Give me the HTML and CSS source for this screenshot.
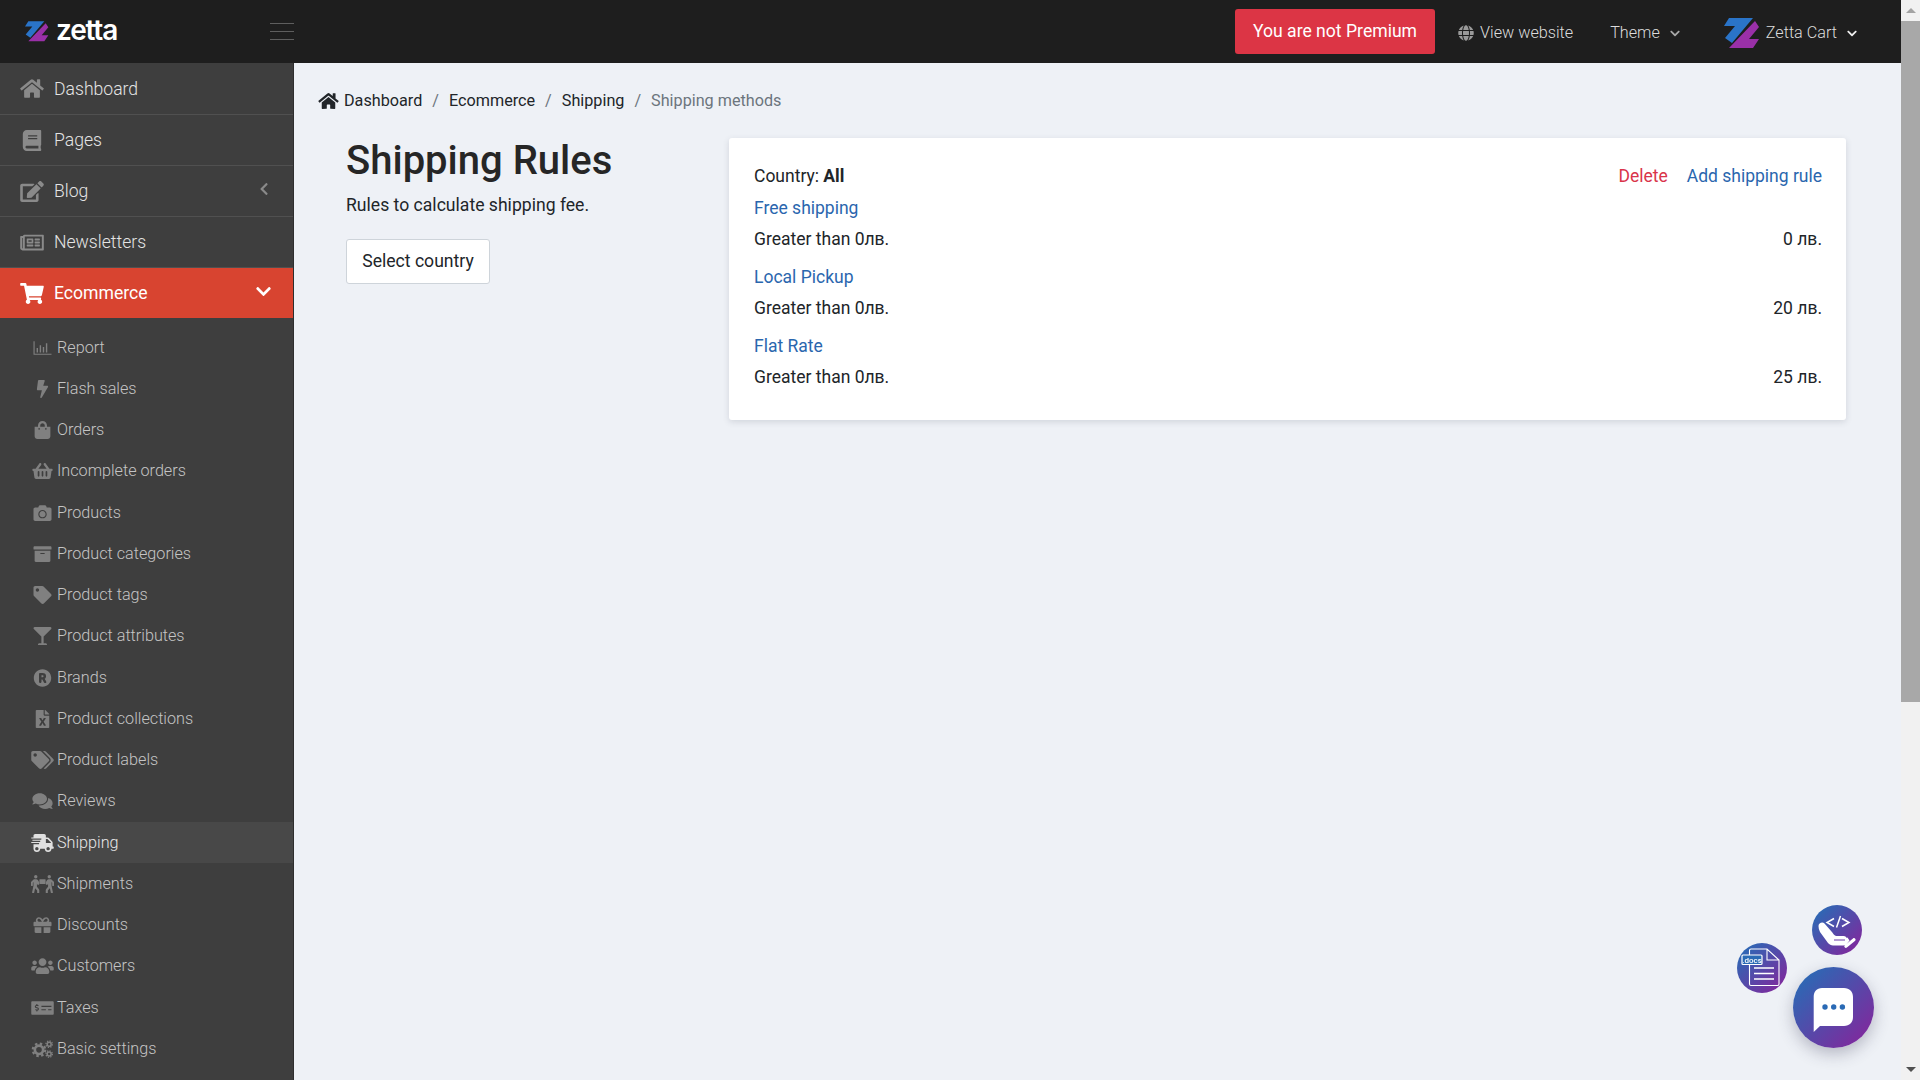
FILE: index.html
```html
<!DOCTYPE html>
<html lang="en">

<head>
  <meta charset="UTF-8">
  <meta name="viewport" content="width=device-width, initial-scale=1.0">
  <title>Shipping methods</title>
  <link rel="stylesheet" href="styles.css">
</head>

<body>
  <!-- icon sprite -->
  <svg class="sprite" xmlns="http://www.w3.org/2000/svg">
    <symbol id="i-home" viewBox="0 0 576 512"><path d="M280.37 148.26L96 300.11V464a16 16 0 0 0 16 16l112.06-.29a16 16 0 0 0 15.92-16V368a16 16 0 0 1 16-16h64a16 16 0 0 1 16 16v95.64a16 16 0 0 0 16 16.05L464 480a16 16 0 0 0 16-16V300L295.67 148.26a12.19 12.19 0 0 0-15.3 0zM571.6 251.47L488 182.56V44.05a12 12 0 0 0-12-12h-56a12 12 0 0 0-12 12v72.61L318.47 43a48 48 0 0 0-61 0L4.34 251.47a12 12 0 0 0-1.6 16.9l25.5 31A12 12 0 0 0 45.15 301l235.22-193.74a12.19 12.19 0 0 1 15.3 0L530.9 301a12 12 0 0 0 16.9-1.6l25.5-31a12 12 0 0 0-1.7-16.93z"/></symbol>
    <symbol id="i-book" viewBox="0 0 448 512"><path d="M448 360V24c0-13.3-10.7-24-24-24H96C43 0 0 43 0 96v320c0 53 43 96 96 96h328c13.3 0 24-10.7 24-24v-16c0-7.5-3.5-14.3-8.9-18.7-4.2-15.4-4.2-59.3 0-74.7 5.4-4.3 8.9-11.1 8.9-18.6zM128 134c0-3.3 2.7-6 6-6h212c3.3 0 6 2.7 6 6v20c0 3.3-2.7 6-6 6H134c-3.3 0-6-2.7-6-6v-20zm0 64c0-3.3 2.7-6 6-6h212c3.3 0 6 2.7 6 6v20c0 3.3-2.7 6-6 6H134c-3.3 0-6-2.7-6-6v-20zm253.4 250H96c-17.7 0-32-14.3-32-32 0-17.6 14.4-32 32-32h285.4c-1.9 17.1-1.9 46.9 0 64z"/></symbol>
    <symbol id="i-edit" viewBox="0 0 576 512"><path d="M402.6 83.2l90.2 90.2c3.8 3.8 3.8 10 0 13.8L274.4 405.6l-92.8 10.3c-12.4 1.4-22.9-9.1-21.5-21.5l10.3-92.8L388.8 83.2c3.8-3.8 10-3.8 13.8 0zm162-22.9l-48.8-48.8c-15.2-15.2-39.9-15.2-55.2 0l-35.4 35.4c-3.8 3.8-3.8 10 0 13.8l90.2 90.2c3.8 3.8 10 3.8 13.8 0l35.4-35.4c15.2-15.3 15.2-40 0-55.2zM384 346.2V448H64V128h229.8c3.2 0 6.2-1.3 8.5-3.5l40-40c7.6-7.6 2.2-20.5-8.5-20.5H48C21.5 64 0 85.5 0 112v352c0 26.5 21.5 48 48 48h352c26.5 0 48-21.5 48-48V306.2c0-10.7-12.9-16-20.5-8.5l-40 40c-2.2 2.3-3.5 5.3-3.5 8.5z"/></symbol>
    <symbol id="i-news" viewBox="0 0 576 512"><path d="M552 64H112c-20.858 0-38.643 13.377-45.248 32H24c-13.255 0-24 10.745-24 24v272c0 30.928 25.072 56 56 56h496c13.255 0 24-10.745 24-24V88c0-13.255-10.745-24-24-24zM48 392V144h16v248c0 4.411-3.589 8-8 8s-8-3.589-8-8zm480 8H111.422c.374-2.614.578-5.283.578-8V112h416v288zM172 280h136c6.627 0 12-5.373 12-12v-96c0-6.627-5.373-12-12-12H172c-6.627 0-12 5.373-12 12v96c0 6.627 5.373 12 12 12zm28-80h80v40h-80v-40zm-40 140v-24c0-6.627 5.373-12 12-12h136c6.627 0 12 5.373 12 12v24c0 6.627-5.373 12-12 12H172c-6.627 0-12-5.373-12-12zm192 0v-24c0-6.627 5.373-12 12-12h104c6.627 0 12 5.373 12 12v24c0 6.627-5.373 12-12 12H364c-6.627 0-12-5.373-12-12zm0-144v-24c0-6.627 5.373-12 12-12h104c6.627 0 12 5.373 12 12v24c0 6.627-5.373 12-12 12H364c-6.627 0-12-5.373-12-12zm0 72v-24c0-6.627 5.373-12 12-12h104c6.627 0 12 5.373 12 12v24c0 6.627-5.373 12-12 12H364c-6.627 0-12-5.373-12-12z"/></symbol>
    <symbol id="i-cart" viewBox="0 0 576 512"><path d="M528.12 301.319l47.273-208C578.806 78.301 567.391 64 551.99 64H159.208l-9.166-44.81C147.758 8.021 137.93 0 126.529 0H24C10.745 0 0 10.745 0 24v16c0 13.255 10.745 24 24 24h69.883l70.248 343.435C147.325 417.1 136 435.222 136 456c0 30.928 25.072 56 56 56s56-25.072 56-56c0-15.674-6.447-29.835-16.824-40h209.647C430.447 426.165 424 440.326 424 456c0 30.928 25.072 56 56 56s56-25.072 56-56c0-22.172-12.888-41.332-31.579-50.405l5.517-24.276c3.413-15.018-8.002-29.319-23.403-29.319H218.117l-6.545-32h293.145c11.206 0 20.92-7.754 23.403-18.681z"/></symbol>
    <symbol id="i-down" viewBox="0 0 448 512"><path d="M207.029 381.476L12.686 187.132c-9.373-9.373-9.373-24.569 0-33.941l22.667-22.667c9.357-9.357 24.522-9.375 33.901-.04L224 284.505l154.745-154.021c9.379-9.335 24.544-9.317 33.901.04l22.667 22.667c9.373 9.373 9.373 24.569 0 33.941L240.971 381.476c-9.373 9.372-24.569 9.372-33.942 0z"/></symbol>
    <symbol id="i-left" viewBox="0 0 320 512"><path d="M34.52 239.03L228.87 44.69c9.37-9.37 24.57-9.37 33.94 0l22.67 22.67c9.36 9.36 9.37 24.52.04 33.9L131.49 256l154.02 154.75c9.34 9.38 9.32 24.54-.04 33.9l-22.67 22.67c-9.37 9.37-24.57 9.37-33.94 0L34.52 272.97c-9.37-9.37-9.37-24.57 0-33.94z"/></symbol>
    <symbol id="i-chart" viewBox="0 0 512 512"><path d="M0 64h32v352h480v32H0zM88 256h40v128H88zM176 176h40v208h-40zM264 224h40v160h-40zM352 120h40v264h-40z"/></symbol>
    <symbol id="i-bolt" viewBox="0 0 320 512"><path d="M296 160H180.6l42.6-129.8C227.2 15 215.7 0 200 0H56C44 0 33.8 8.9 32.2 20.8l-32 240C-1.7 275.2 9.5 288 24 288h118.7L96.6 482.5c-3.6 15.2 8 29.5 23.3 29.5 8.4 0 16.4-4.4 20.8-12l176-304c9.3-15.9-2.2-36-20.7-36z"/></symbol>
    <symbol id="i-bag" viewBox="0 0 448 512"><path d="M352 160v-32C352 57.42 294.579 0 224 0 153.42 0 96 57.42 96 128v32H0v272c0 44.183 35.817 80 80 80h288c44.183 0 80-35.817 80-80V160h-96zm-192-32c0-35.29 28.71-64 64-64s64 28.71 64 64v32H160v-32zm160 120c-13.255 0-24-10.745-24-24s10.745-24 24-24 24 10.745 24 24-10.745 24-24 24zm-192 0c-13.255 0-24-10.745-24-24s10.745-24 24-24 24 10.745 24 24-10.745 24-24 24z"/></symbol>
    <symbol id="i-basket" viewBox="0 0 576 512"><path d="M576 216v16c0 13.255-10.745 24-24 24h-8l-26.113 182.788C514.509 462.435 494.257 480 470.37 480H105.63c-23.887 0-44.139-17.565-47.518-41.212L32 256h-8c-13.255 0-24-10.745-24-24v-16c0-13.255 10.745-24 24-24h67.341l106.78-146.821c10.395-14.292 30.407-17.453 44.701-7.058 14.293 10.395 17.453 30.408 7.058 44.701L170.477 192h235.046L326.12 82.821c-10.395-14.292-7.234-34.306 7.059-44.701 14.291-10.395 34.306-7.235 44.701 7.058L484.659 192H552c13.255 0 24 10.745 24 24zM312 392V280c0-13.255-10.745-24-24-24s-24 10.745-24 24v112c0 13.255 10.745 24 24 24s24-10.745 24-24zm112 0V280c0-13.255-10.745-24-24-24s-24 10.745-24 24v112c0 13.255 10.745 24 24 24s24-10.745 24-24zm-224 0V280c0-13.255-10.745-24-24-24s-24 10.745-24 24v112c0 13.255 10.745 24 24 24s24-10.745 24-24z"/></symbol>
    <symbol id="i-camera" viewBox="0 0 512 512"><path d="M512 144v288c0 26.5-21.5 48-48 48H48c-26.5 0-48-21.5-48-48V144c0-26.5 21.5-48 48-48h88l12.3-32.9c7-18.7 24.9-31.1 44.9-31.1h125.5c20 0 37.9 12.4 44.9 31.1L376 96h88c26.5 0 48 21.5 48 48zM376 288c0-66.2-53.8-120-120-120s-120 53.8-120 120 53.8 120 120 120 120-53.8 120-120zm-32 0c0 48.5-39.5 88-88 88s-88-39.5-88-88 39.5-88 88-88 88 39.5 88 88z"/></symbol>
    <symbol id="i-archive" viewBox="0 0 512 512"><path d="M32 448c0 17.7 14.3 32 32 32h384c17.7 0 32-14.3 32-32V160H32v288zm160-212c0-6.6 5.4-12 12-12h104c6.6 0 12 5.4 12 12v8c0 6.6-5.4 12-12 12H204c-6.6 0-12-5.4-12-12v-8zM480 32H32C14.3 32 0 46.3 0 64v48c0 8.8 7.2 16 16 16h480c8.8 0 16-7.2 16-16V64c0-17.7-14.3-32-32-32z"/></symbol>
    <symbol id="i-tag" viewBox="0 0 512 512"><path d="M0 252.118V48C0 21.49 21.49 0 48 0h204.118a48 48 0 0 1 33.941 14.059l211.882 211.882c18.745 18.745 18.745 49.137 0 67.882L293.823 497.941c-18.745 18.745-49.137 18.745-67.882 0L14.059 286.059A48 48 0 0 1 0 252.118zM112 64c-26.51 0-48 21.49-48 48s21.49 48 48 48 48-21.49 48-48-21.49-48-48-48z"/></symbol>
    <symbol id="i-glass" viewBox="0 0 512 512"><path d="M502.05 57.6C523.3 36.34 508.25 0 478.2 0H33.8C3.75 0-11.3 36.34 9.95 57.6L224 271.64V464h-56c-22.09 0-40 17.91-40 40 0 4.42 3.58 8 8 8h240c4.42 0 8-3.58 8-8 0-22.09-17.91-40-40-40h-56V271.64L502.05 57.6z"/></symbol>
    <symbol id="i-reg" viewBox="0 0 512 512"><path d="M285.363 207.475c0 18.6-9.831 28.431-28.431 28.431h-29.876v-56.14h23.378c28.668 0 34.929 8.773 34.929 27.709zM504 256c0 136.967-111.033 248-248 248S8 392.967 8 256 119.033 8 256 8s248 111.033 248 248zM363.411 360.414c-46.729-84.825-43.299-78.636-44.702-80.98 23.432-15.172 37.945-42.979 37.945-74.486 0-54.244-31.5-89.252-105.498-89.252h-70.667c-13.255 0-24 10.745-24 24V372c0 13.255 10.745 24 24 24h22.567c13.255 0 24-10.745 24-24v-71.663h25.556l44.129 82.937a24.001 24.001 0 0 0 21.188 12.727h24.464c18.261-.001 29.829-19.591 21.018-35.587z"/></symbol>
    <symbol id="i-file" viewBox="0 0 384 512"><path d="M224 136V0H24C10.7 0 0 10.7 0 24v464c0 13.3 10.7 24 24 24h336c13.3 0 24-10.7 24-24V160H248c-13.2 0-24-10.8-24-24zm60.1 106.5L224 336l60.1 93.5c5.1 8-.6 18.5-10.1 18.5h-34.9c-4.4 0-8.5-2.4-10.6-6.3C208.9 405.5 192 373 192 373c-6.4 14.8-10 20-36.6 68.8-2.1 3.9-6.1 6.3-10.5 6.3H110c-9.5 0-15.2-10.5-10.1-18.5l60.3-93.5-60.3-93.5c-5.2-8 .6-18.5 10.1-18.5h34.8c4.4 0 8.5 2.4 10.6 6.3 26.1 48.8 20 33.6 36.6 68.5 0 0 6.1-11.7 36.6-68.5 2.1-3.9 6.2-6.3 10.6-6.3H274c9.5-.1 15.2 10.4 10.1 18.4zM384 121.9v6.1H256V0h6.1c6.4 0 12.5 2.5 17 7l97.9 98c4.5 4.5 7 10.6 7 16.9z"/></symbol>
    <symbol id="i-tags" viewBox="0 0 640 512"><path d="M497.941 225.941L286.059 14.059A48 48 0 0 0 252.118 0H48C21.49 0 0 21.49 0 48v204.118a48 48 0 0 0 14.059 33.941l211.882 211.882c18.744 18.745 49.136 18.746 67.882 0l204.118-204.118c18.745-18.745 18.745-49.137 0-67.882zM112 160c-26.51 0-48-21.49-48-48s21.49-48 48-48 48 21.49 48 48-21.49 48-48 48zm513.941 133.823L421.823 497.941c-18.745 18.745-49.137 18.745-67.882 0l-.36-.36L527.64 323.522c16.999-16.999 26.36-39.6 26.36-63.64s-9.362-46.641-26.36-63.64L331.397 0h48.721a48 48 0 0 1 33.941 14.059l211.882 211.882c18.745 18.745 18.745 49.137 0 67.882z"/></symbol>
    <symbol id="i-comments" viewBox="0 0 576 512"><path d="M416 192c0-88.4-93.1-160-208-160S0 103.6 0 192c0 34.3 14.1 65.9 38 92-13.4 30.2-35.5 54.2-35.8 54.5-2.2 2.3-2.8 5.7-1.5 8.7S4.8 352 8 352c36.6 0 66.9-12.3 88.7-25 32.2 15.7 70.3 25 111.3 25 114.9 0 208-71.6 208-160zm122 220c23.9-26 38-57.7 38-92 0-66.9-53.5-124.2-129.3-148.1.9 6.6 1.3 13.3 1.3 20.1 0 105.9-107.7 192-240 192-10.8 0-21.3-.8-31.7-1.9C207.8 439.6 281.8 480 368 480c41 0 79.1-9.2 111.3-25 21.8 12.7 52.1 25 88.7 25 3.2 0 6.1-1.9 7.3-4.8 1.3-2.9.7-6.3-1.5-8.7-.3-.3-22.4-24.2-35.8-54.5z"/></symbol>
    <symbol id="i-truck" viewBox="0 0 640 512"><path d="M624 352h-16V243.9c0-12.7-5.1-24.9-14.1-33.9L494 110.1c-9-9-21.2-14.1-33.9-14.1H416V48c0-26.5-21.5-48-48-48H112C85.5 0 64 21.5 64 48v48H8c-4.4 0-8 3.6-8 8v16c0 4.4 3.6 8 8 8h272c4.4 0 8 3.6 8 8v16c0 4.4-3.6 8-8 8H40c-4.4 0-8 3.6-8 8v16c0 4.4 3.6 8 8 8h208c4.4 0 8 3.6 8 8v16c0 4.4-3.6 8-8 8H8c-4.4 0-8 3.6-8 8v16c0 4.4 3.6 8 8 8h208c4.4 0 8 3.6 8 8v16c0 4.4-3.6 8-8 8H64v128c0 53 43 96 96 96s96-43 96-96h128c0 53 43 96 96 96s96-43 96-96h48c8.8 0 16-7.2 16-16v-32c0-8.8-7.2-16-16-16zM160 464c-26.5 0-48-21.5-48-48s21.5-48 48-48 48 21.5 48 48-21.5 48-48 48zm320 0c-26.5 0-48-21.5-48-48s21.5-48 48-48 48 21.5 48 48-21.5 48-48 48zm80-208H416V144h44.1l99.9 99.9V256z"/></symbol>
    <symbol id="i-carry" viewBox="0 0 640 512"><circle cx="128" cy="48" r="48"/><circle cx="512" cy="48" r="48"/><rect x="232" y="120" width="176" height="136" rx="12"/><path d="M74 120h66c22 0 40 10 52 30l34 58h-2v70h-46l-16-26v82l52 62c10 12 14 24 14 38v66c0 17-14 30-30 30s-30-13-30-30v-58l-58-66-26 124c-4 16-18 26-34 24-18-3-28-18-25-36l38-180V196l-18 22v70c0 16-12 28-28 28S-8 304-8 288v-78c0-8 2-14 8-20zM566 120h-66c-22 0-40 10-52 30l-34 58h2v70h46l16-26v82l-52 62c-10 12-14 24-14 38v66c0 17 14 30 30 30s30-13 30-30v-58l58-66 26 124c4 16 18 26 34 24 18-3 28-18 25-36l-38-180V196l18 22v70c0 16 12 28 28 28s28-12 28-28v-78c0-8-2-14-8-20z"/></symbol>
    <symbol id="i-gift" viewBox="0 0 512 512"><path d="M32 448c0 17.7 14.3 32 32 32h160V320H32v128zm256 32h160c17.7 0 32-14.3 32-32V320H288v160zm192-320h-42.1c6.2-12.1 10.1-25.5 10.1-40 0-48.5-39.5-88-88-88-41.6 0-68.5 21.3-103 68.3-34.5-47-61.4-68.3-103-68.3-48.5 0-88 39.5-88 88 0 14.5 3.8 27.9 10.1 40H32c-17.7 0-32 14.3-32 32v80c0 8.8 7.2 16 16 16h480c8.8 0 16-7.2 16-16v-80c0-17.7-14.3-32-32-32zm-326.1 0c-22.1 0-40-17.9-40-40s17.9-40 40-40c19.9 0 34.6 3.3 86.1 80h-86.1zm206.1 0h-86.1c51.4-76.5 65.7-80 86.1-80 22.1 0 40 17.9 40 40s-17.9 40-40 40z"/></symbol>
    <symbol id="i-users" viewBox="0 0 640 512"><path d="M96 224c35.3 0 64-28.7 64-64s-28.7-64-64-64-64 28.7-64 64 28.7 64 64 64zm448 0c35.3 0 64-28.7 64-64s-28.7-64-64-64-64 28.7-64 64 28.7 64 64 64zm32 32h-64c-17.6 0-33.5 7.1-45.1 18.6 40.3 22.1 68.9 62 75.1 109.4h66c17.7 0 32-14.3 32-32v-32c0-35.3-28.7-64-64-64zm-256 0c61.9 0 112-50.1 112-112S381.9 32 320 32 208 82.1 208 144s50.1 112 112 112zm76.8 32h-8.3c-20.8 10-43.9 16-68.5 16s-47.6-6-68.5-16h-8.3C179.6 288 128 339.6 128 403.2V432c0 26.5 21.5 48 48 48h288c26.5 0 48-21.5 48-48v-28.8c0-63.6-51.6-115.2-115.2-115.2zm-223.7-13.4C161.5 263.1 145.6 256 128 256H64c-35.3 0-64 28.7-64 64v32c0 17.7 14.3 32 32 32h65.9c6.3-47.4 34.9-87.3 75.2-109.4z"/></symbol>
    <symbol id="i-money" viewBox="0 0 640 512"><path d="M608 64H32C14.33 64 0 78.33 0 96v320c0 17.67 14.33 32 32 32h576c17.67 0 32-14.33 32-32V96c0-17.67-14.33-32-32-32zM176 327.88V344c0 4.42-3.58 8-8 8h-16c-4.42 0-8-3.58-8-8v-16.29c-11.29-.58-22.27-4.52-31.37-11.35-3.9-2.93-4.1-8.77-.57-12.14l11.75-11.21c2.77-2.64 6.89-2.76 10.13-.73 3.87 2.42 8.26 3.72 12.82 3.72h28.11c6.5 0 11.8-5.92 11.8-13.19 0-5.95-3.61-11.19-8.77-12.73l-45-13.5c-18.59-5.58-31.58-23.42-31.58-43.39 0-24.52 19.05-44.44 42.67-45.07V152c0-4.42 3.58-8 8-8h16c4.42 0 8 3.58 8 8v16.29c11.29.58 22.27 4.51 31.37 11.35 3.9 2.93 4.1 8.77.57 12.14l-11.75 11.21c-2.77 2.64-6.89 2.76-10.13.73-3.87-2.43-8.26-3.72-12.82-3.72h-28.11c-6.5 0-11.8 5.92-11.8 13.19 0 5.95 3.61 11.19 8.77 12.73l45 13.5c18.59 5.58 31.58 23.42 31.58 43.39 0 24.53-19.05 44.44-42.67 45.07zM416 312c0 4.42-3.58 8-8 8H296c-4.42 0-8-3.58-8-8v-16c0-4.42 3.58-8 8-8h112c4.42 0 8 3.58 8 8v16zm160 0c0 4.42-3.58 8-8 8h-80c-4.42 0-8-3.58-8-8v-16c0-4.42 3.58-8 8-8h80c4.42 0 8 3.58 8 8v16zm0-96c0 4.42-3.58 8-8 8H296c-4.42 0-8-3.58-8-8v-16c0-4.42 3.58-8 8-8h272c4.42 0 8 3.58 8 8v16z"/></symbol>
    <symbol id="i-cogs" viewBox="0 0 640 512">
      <circle cx="220" cy="280" r="118" fill="none" stroke="currentColor" stroke-width="76"/>
      <circle cx="220" cy="280" r="178" fill="none" stroke="currentColor" stroke-width="60" stroke-dasharray="70 70"/>
      <circle cx="510" cy="120" r="56" fill="none" stroke="currentColor" stroke-width="44"/>
      <circle cx="510" cy="120" r="92" fill="none" stroke="currentColor" stroke-width="36" stroke-dasharray="36 36"/>
      <circle cx="510" cy="400" r="56" fill="none" stroke="currentColor" stroke-width="44"/>
      <circle cx="510" cy="400" r="92" fill="none" stroke="currentColor" stroke-width="36" stroke-dasharray="36 36"/>
    </symbol>
    <symbol id="i-globe" viewBox="0 0 496 512"><path d="M336.5 160C322 70.7 287.8 8 248 8s-74 62.7-88.5 152h177zM152 256c0 22.2 1.2 43.5 3.3 64h185.3c2.1-20.5 3.3-41.8 3.3-64s-1.2-43.5-3.3-64H155.3c-2.1 20.5-3.3 41.8-3.3 64zm324.7-96c-28.6-67.9-86.5-120.4-158-141.6 24.4 33.8 41.2 84.7 50 141.6h108zM177.2 18.4C105.8 39.6 47.8 92.1 19.3 160h108c8.7-56.9 25.5-107.8 49.9-141.6zM487.4 192H372.7c2.1 21 3.3 42.5 3.3 64s-1.2 43-3.3 64h114.6c5.5-20.5 8.6-41.8 8.6-64s-3.1-43.5-8.5-64zM120 256c0-21.5 1.2-43 3.3-64H8.6C3.2 212.5 0 233.8 0 256s3.2 43.5 8.6 64h114.6c-2-21-3.2-42.5-3.2-64zm39.5 96c14.5 89.3 48.7 152 88.5 152s74-62.7 88.5-152h-177zm159.3 141.6c71.4-21.2 129.4-73.7 158-141.6h-108c-8.8 56.9-25.6 107.8-50 141.6zM19.3 352c28.6 67.9 86.5 120.4 158 141.6-24.4-33.8-41.2-84.7-50-141.6h-108z"/></symbol>
    <symbol id="i-logo" viewBox="0 0 36 31">
      <path fill="#2a74c8" d="M5 0H29L8 25 1 20 11 8H0Z"/>
      <path fill="#9a30a8" d="M31 3 35 9 25 21H35L29 30H5Z"/>
    </symbol>
    <linearGradient id="fab-grad" x1="0" y1="0" x2="1" y2="1">
      <stop offset="0.1" stop-color="#2a6ab5"/>
      <stop offset="0.9" stop-color="#80299d"/>
    </linearGradient>
  </svg>

  <div class="app">
    <div class="page">
      <header class="topbar">
        <div class="brand">
          <a href="#" class="brand__logo">
            <svg class="brand__mark"><use href="#i-logo"></use></svg>
            <span class="brand__name">zetta</span>
          </a>
          <button class="burger" aria-label="Toggle menu"><i></i><i></i><i></i></button>
        </div>
        <div class="topbar__right">
          <a href="#" class="premium">You are not Premium</a>
          <a href="#" class="topnav topnav--site"><svg class="topnav__globe"><use href="#i-globe"></use></svg>View website</a>
          <a href="#" class="topnav topnav--theme">Theme<svg class="topnav__caret"><use href="#i-down"></use></svg></a>
          <a href="#" class="topnav topnav--user"><svg class="topnav__avatar"><use href="#i-logo"></use></svg>Zetta Cart<svg class="topnav__caret topnav__caret--on"><use href="#i-down"></use></svg></a>
        </div>
      </header>

      <div class="body">
        <nav class="sidebar">
          <ul class="menu">
            <li><a href="#" class="menu__link menu__link--first"><svg class="menu__ico"><use href="#i-home"></use></svg>Dashboard</a></li>
            <li><a href="#" class="menu__link"><svg class="menu__ico"><use href="#i-book"></use></svg>Pages</a></li>
            <li><a href="#" class="menu__link"><svg class="menu__ico"><use href="#i-edit"></use></svg>Blog<svg class="menu__arrow"><use href="#i-left"></use></svg></a></li>
            <li><a href="#" class="menu__link"><svg class="menu__ico"><use href="#i-news"></use></svg>Newsletters</a></li>
            <li><a href="#" class="menu__link menu__link--active"><svg class="menu__ico"><use href="#i-cart"></use></svg>Ecommerce<svg class="menu__arrow"><use href="#i-down"></use></svg></a></li>
          </ul>
          <ul class="submenu">
            <li><a href="#" class="submenu__link"><svg class="submenu__ico"><use href="#i-chart"></use></svg>Report</a></li>
            <li><a href="#" class="submenu__link"><svg class="submenu__ico"><use href="#i-bolt"></use></svg>Flash sales</a></li>
            <li><a href="#" class="submenu__link"><svg class="submenu__ico"><use href="#i-bag"></use></svg>Orders</a></li>
            <li><a href="#" class="submenu__link"><svg class="submenu__ico"><use href="#i-basket"></use></svg>Incomplete orders</a></li>
            <li><a href="#" class="submenu__link"><svg class="submenu__ico"><use href="#i-camera"></use></svg>Products</a></li>
            <li><a href="#" class="submenu__link"><svg class="submenu__ico"><use href="#i-archive"></use></svg>Product categories</a></li>
            <li><a href="#" class="submenu__link"><svg class="submenu__ico"><use href="#i-tag"></use></svg>Product tags</a></li>
            <li><a href="#" class="submenu__link"><svg class="submenu__ico"><use href="#i-glass"></use></svg>Product attributes</a></li>
            <li><a href="#" class="submenu__link"><svg class="submenu__ico"><use href="#i-reg"></use></svg>Brands</a></li>
            <li><a href="#" class="submenu__link"><svg class="submenu__ico"><use href="#i-file"></use></svg>Product collections</a></li>
            <li><a href="#" class="submenu__link"><svg class="submenu__ico"><use href="#i-tags"></use></svg>Product labels</a></li>
            <li><a href="#" class="submenu__link"><svg class="submenu__ico"><use href="#i-comments"></use></svg>Reviews</a></li>
            <li><a href="#" class="submenu__link submenu__link--active"><svg class="submenu__ico"><use href="#i-truck"></use></svg>Shipping</a></li>
            <li><a href="#" class="submenu__link"><svg class="submenu__ico"><use href="#i-carry"></use></svg>Shipments</a></li>
            <li><a href="#" class="submenu__link"><svg class="submenu__ico"><use href="#i-gift"></use></svg>Discounts</a></li>
            <li><a href="#" class="submenu__link"><svg class="submenu__ico"><use href="#i-users"></use></svg>Customers</a></li>
            <li><a href="#" class="submenu__link"><svg class="submenu__ico"><use href="#i-money"></use></svg>Taxes</a></li>
            <li><a href="#" class="submenu__link"><svg class="submenu__ico"><use href="#i-cogs"></use></svg>Basic settings</a></li>
          </ul>
        </nav>

        <main class="main">
          <ol class="crumbs">
            <li class="crumbs__item"><a href="#"><svg class="crumbs__home"><use href="#i-home"></use></svg>Dashboard</a></li>
            <li class="crumbs__item"><a href="#">Ecommerce</a></li>
            <li class="crumbs__item"><a href="#">Shipping</a></li>
            <li class="crumbs__item crumbs__item--current">Shipping methods</li>
          </ol>
          <div class="rules">
            <section class="rules__intro">
              <h1 class="rules__title">Shipping Rules</h1>
              <p class="rules__lead">Rules to calculate shipping fee.</p>
              <button class="btn">Select country</button>
            </section>
            <section class="card">
              <div class="card__head">
                <div>Country: <strong>All</strong></div>
                <div class="card__actions">
                  <a href="#" class="link link--danger">Delete</a>
                  <a href="#" class="link">Add shipping rule</a>
                </div>
              </div>
              <div class="rule">
                <a href="#" class="link rule__name">Free shipping</a>
                <div class="rule__row"><span>Greater than 0лв.</span><span>0 лв.</span></div>
              </div>
              <div class="rule">
                <a href="#" class="link rule__name">Local Pickup</a>
                <div class="rule__row"><span>Greater than 0лв.</span><span>20 лв.</span></div>
              </div>
              <div class="rule">
                <a href="#" class="link rule__name">Flat Rate</a>
                <div class="rule__row"><span>Greater than 0лв.</span><span>25 лв.</span></div>
              </div>
            </section>
          </div>
        </main>
      </div>
    </div>

    <div class="scrollbar">
      <span class="scrollbar__arrow scrollbar__arrow--up"></span>
      <div class="scrollbar__track"><div class="scrollbar__thumb"></div></div>
      <span class="scrollbar__arrow scrollbar__arrow--down"></span>
    </div>
  </div>

  <!-- floating buttons -->
  <a href="#" class="fab fab--dev">
    <svg viewBox="0 0 50 50">
      <circle cx="25" cy="25" r="25" fill="url(#fab-grad)"/>
      <path fill="none" stroke="#fff" stroke-width="1.500" d="M22 13.500l-7 4 7 4M30 13.500l7 4-7 4M28.500 11l-4 11.500"/>
      <path fill="#fff" d="M6.500 21c0-3 4-4.500 6-2.500l7 8c1.500 1.500 2.500 4 4.500 4.500h7.500c2 0 3 1 3 2l1-.5 2 3-3.500 4.500-2.500.5H21c-2 0-3.500-1-5-2.500L8 27c-1-2-1.500-4-1.500-6z"/>
      <path fill="none" stroke="#6a3aa8" stroke-width="1" d="M22 35h11"/>
      <path fill="#fff" d="M33 40l8-6.500c.8-.6 1.600-.5 2.200.2.600.8.500 1.600-.3 2.300l-8 6.500c-.8.600-1.600.5-2.200-.2-.6-.8-.5-1.700.3-2.300z"/>
    </svg>
  </a>
  <a href="#" class="fab fab--docs">
    <svg viewBox="0 0 50 50">
      <circle cx="25" cy="25" r="25" fill="url(#fab-grad)"/>
      <g fill="none" stroke="#fff" stroke-width="1.100">
        <path d="M12.500 12V7.500c0-1 .5-1.500 1.500-1.500H30l12 11V41c0 1-.5 1.500-1.500 1.500H14c-1 0-1.500-.5-1.500-1.500V22M30 6V17h12"/>
        <path d="M17 25h20M17 30.500h20M17 36h20" stroke-width="1.400"/>
      </g>
      <rect x="5" y="12" width="20" height="9.500" rx="1" fill="#2a6ab5" stroke="#fff" stroke-width="1.200"/>
      <text x="15" y="19.500" class="fab__docs-text">.docs</text>
    </svg>
  </a>
  <a href="#" class="fab fab--chat">
    <svg viewBox="0 0 81 81">
      <circle cx="40.500" cy="40.500" r="40.500" fill="url(#fab-grad)"/>
      <path fill="#fff" d="M29 21h22c5.500 0 9 3.500 9 9v20c0 5.500-3.500 9-9 9H27l-6.300 6V30c0-5.500 3-9 8.300-9z"/>
      <circle cx="32" cy="40" r="2.700" fill="#2a6ab5"/>
      <circle cx="40.700" cy="40" r="2.700" fill="#2a6ab5"/>
      <circle cx="49.400" cy="40" r="2.700" fill="#2a6ab5"/>
    </svg>
  </a>
</body>

</html>
```

FILE: styles.css
```css
* {
  margin: 0;
  padding: 0;
  box-sizing: border-box;
}

html,
body {
  height: 100%;
  overflow: hidden;
}

body {
  font-family: Roboto, 'Liberation Sans', sans-serif;
  font-size: 16px;
  line-height: 24px;
  color: #212529;
  background-color: #eef1f6;
}

li {
  list-style-type: none;
}

a {
  text-decoration: none;
  color: inherit;
}

.sprite {
  position: absolute;
  width: 0;
  height: 0;
}

svg {
  display: block;
  fill: currentColor;
  flex-shrink: 0;
}

.app {
  display: flex;
  height: 100vh;
}

.page {
  flex: 1;
  display: flex;
  flex-direction: column;
  min-width: 0;
}

/* TOPBAR */
.topbar {
  flex: none;
  display: flex;
  justify-content: space-between;
  height: 63px;
  background-color: #1e1e1e;
}

.brand {
  display: flex;
  align-items: center;
  justify-content: space-between;
  width: 294px;
  padding: 0 0 0 25px;
}

.brand__logo {
  display: flex;
  align-items: center;
  gap: 7px;
}

.brand__mark {
  width: 24px;
  height: 21px;
}

.brand__name {
  font-family: Inter, Roboto, sans-serif;
  font-size: 28px;
  font-weight: 600;
  line-height: 30px;
  letter-spacing: -1.200px;
  color: #fff;
  margin-bottom: 3px;
}

.burger {
  display: flex;
  flex-direction: column;
  gap: 7px;
  width: 24px;
  background: none;
  border: 0;
}

.burger i {
  display: block;
  height: 1px;
  background-color: #5e5e5e;
}

.topbar__right {
  display: flex;
  align-items: center;
  padding-right: 44px;
  font-size: 16.200px;
  font-weight: 300;
  color: #dcdcdc;
}

.premium {
  display: block;
  width: 200px;
  height: 45px;
  margin-right: 23px;
  border-radius: 3px;
  background-color: #dc3545;
  color: #fff;
  font-size: 17.600px;
  font-weight: 400;
  line-height: 45px;
  text-align: center;
}

.topnav {
  display: flex;
  align-items: center;
  height: 100%;
  padding-top: 3px;
}

.topnav__globe {
  width: 16px;
  height: 16px;
  margin-right: 6px;
  color: #9a9a9a;
}

.topnav--theme {
  margin-left: 37px;
}

.topnav--user {
  margin-left: 44px;
}

.topnav__caret {
  width: 10px;
  height: 11px;
  margin-left: 10px;
  color: #a8a8a8;
}

.topnav__caret--on {
  color: #eee;
}

.topnav__avatar {
  width: 36px;
  height: 31px;
  margin-right: 6px;
}

/* SIDEBAR */
.body {
  flex: 1;
  display: flex;
  min-height: 0;
}

.sidebar {
  flex: none;
  width: 294px;
  overflow: hidden;
  background-color: #3e3e3e;
  border-right: 1px solid #2e2e2e;
}

.menu__link {
  display: flex;
  align-items: center;
  height: 51px;
  padding: 0 22px 0 20px;
  border-bottom: 1px solid #505050;
  color: #e4e4e4;
  font-size: 17.600px;
  font-weight: 300;
}

.menu__link--first {
  height: 52px;
}

.menu__link--active {
  height: 50px;
  border-bottom: 0;
  background-color: #d84430;
  color: #fff;
  font-weight: 400;
}

.menu__ico {
  width: 24px;
  height: 21px;
  margin-right: 10px;
  color: #8a8a8a;
}

.menu__link--active .menu__ico {
  color: #fff;
}

.menu__arrow {
  width: 14px;
  height: 14px;
  margin-left: auto;
  margin-bottom: 5px;
  color: #8a8a8a;
}

.menu__link--active .menu__arrow {
  color: #fff;
  height: 17px;
  width: 15px;
  margin-bottom: 4px;
}

.submenu {
  padding-top: 9px;
}

.submenu__link {
  display: flex;
  align-items: center;
  height: 41.250px;
  padding-left: 31px;
  color: #c4c4c4;
  font-size: 16.200px;
  font-weight: 300;
}

.submenu__link--active {
  background-color: #484848;
  color: #e6e6e6;
}

.submenu__ico {
  width: 23px;
  height: 18px;
  margin-right: 3px;
  color: #808080;
}

.submenu__link--active .submenu__ico {
  color: #e0e0e0;
}

/* MAIN */
.main {
  flex: 1;
  min-width: 0;
  padding: 0 55px 0 24px;
}

.crumbs {
  display: flex;
  align-items: center;
  height: 75px;
  font-size: 16.200px;
  color: #212529;
}

.crumbs__item {
  display: flex;
  align-items: center;
}

.crumbs__item a {
  display: flex;
  align-items: center;
}

.crumbs__item + .crumbs__item::before {
  content: "/";
  padding: 0 10px;
  color: #6c757d;
}

.crumbs__item--current {
  color: #6c757d;
}

.crumbs__home {
  width: 21px;
  height: 18px;
  margin-right: 5px;
  color: #212529;
}

.rules {
  display: flex;
}

.rules__intro {
  flex: none;
  width: 411px;
  padding-left: 28px;
}

.rules__title {
  font-size: 40px;
  font-weight: 500;
  line-height: 48px;
  margin-top: -1px;
  margin-bottom: 6.500px;
  color: #262626;
}

.rules__lead {
  font-size: 17.600px;
  line-height: 27px;
  margin-bottom: 20px;
}

.btn {
  width: 144px;
  height: 45px;
  border: 1px solid #ced4da;
  border-radius: 3px;
  background-color: #fff;
  color: #212529;
  font-family: inherit;
  font-size: 17.600px;
}

.card {
  flex: 1;
  height: 282px;
  padding: 26px 24px 0 25px;
  border-radius: 3px;
  background-color: #fff;
  box-shadow: 0 2px 6px rgba(60, 70, 90, 0.16);
  font-size: 17.500px;
}

.card__head {
  display: flex;
  justify-content: space-between;
  margin-bottom: 8px;
}

.card__actions {
  display: flex;
  gap: 19px;
}

.link {
  color: #2a66ae;
}

.link--danger {
  color: #d9344a;
}

.rule {
  margin-bottom: 14px;
}

.rule__name {
  display: block;
  margin-bottom: 7px;
}

.rule__row {
  display: flex;
  justify-content: space-between;
}

/* SCROLLBAR */
.scrollbar {
  flex: none;
  display: flex;
  flex-direction: column;
  width: 19px;
  background-color: #f1f1f1;
}

.scrollbar__arrow {
  position: relative;
  flex: none;
  height: 21px;
}

.scrollbar__arrow::after {
  content: "";
  position: absolute;
  left: 5px;
  border-left: 5px solid transparent;
  border-right: 5px solid transparent;
}

.scrollbar__arrow--up::after {
  top: 8px;
  border-bottom: 5px solid #a3a3a3;
}

.scrollbar__arrow--down::after {
  top: 8px;
  border-top: 5px solid #505050;
}

.scrollbar__track {
  flex: 1;
}

.scrollbar__thumb {
  height: 681px;
  background-color: #a8a8a8;
}

/* FLOATING BUTTONS */
.fab {
  position: fixed;
  border-radius: 50%;
}

.fab svg {
  width: 100%;
  height: 100%;
}

.fab--dev {
  left: 1812px;
  top: 905px;
  width: 50px;
  height: 50px;
}

.fab--docs {
  left: 1737px;
  top: 943px;
  width: 50px;
  height: 50px;
}

.fab--chat {
  left: 1793px;
  top: 967px;
  width: 81px;
  height: 81px;
  box-shadow: 0 6px 16px rgba(50, 50, 80, 0.3);
}

.fab__docs-text {
  fill: #fff;
  font-family: Roboto, sans-serif;
  font-size: 8px;
  font-weight: 500;
  text-anchor: middle;
}
```
